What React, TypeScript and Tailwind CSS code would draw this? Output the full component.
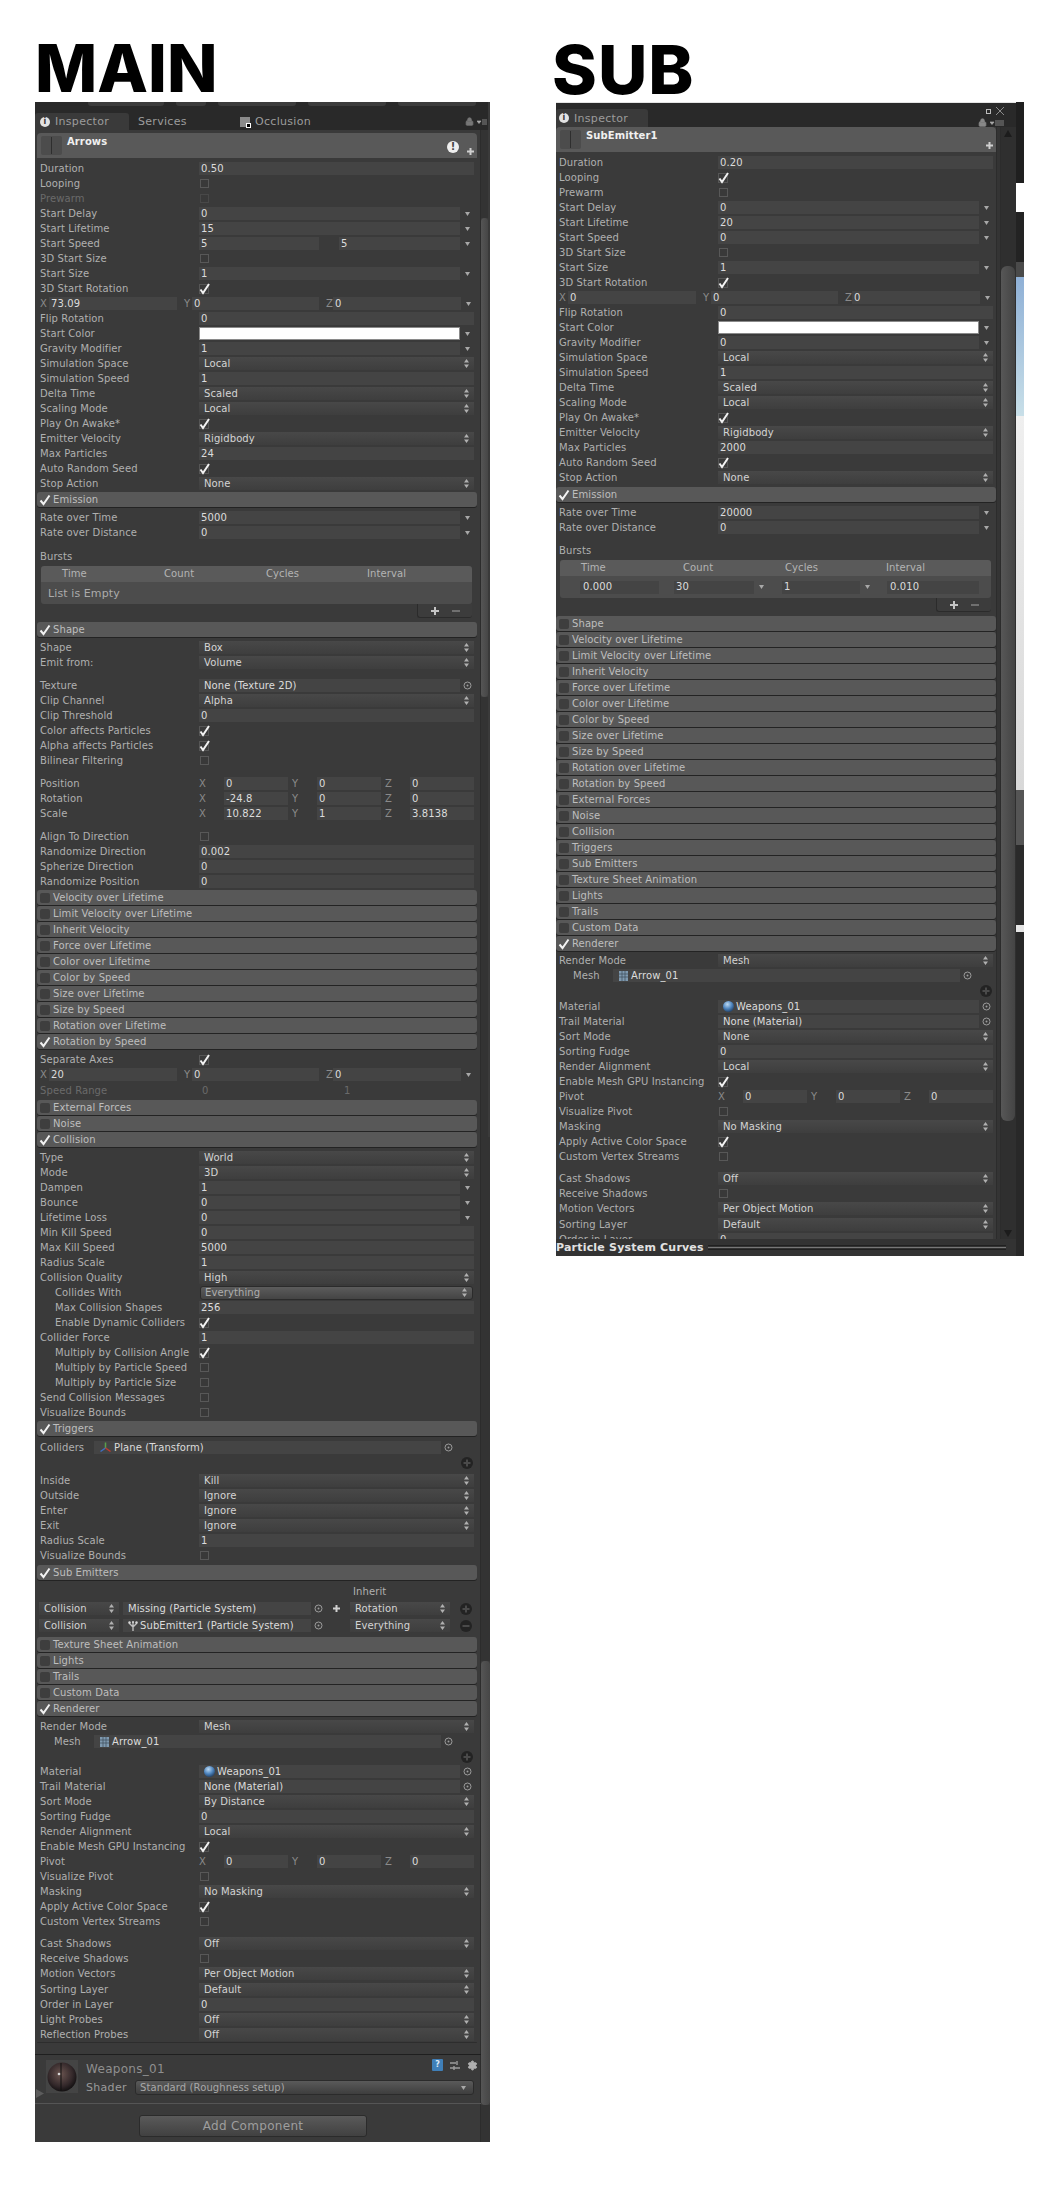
import React from 'react';
import clsx from 'clsx';
import { Lock, Settings } from 'lucide-react';

const Check = () => (
  <svg width="14" height="14" viewBox="0 0 14 14" className="-ml-[1px]">
    <rect x="1.5" y="2.5" width="9" height="9" fill="#3a3a3a" stroke="#565656" />
    <path d="M2.5 7.5 L5 11 L11 2" fill="none" stroke="#f2f2f2" strokeWidth="2" />
  </svg>
);

const EmptyBox = ({ dim }: { dim?: boolean }) => (
  <div className={clsx('ml-[1px] h-[9px] w-[9px] border bg-[#393939]', dim ? 'border-[#484848]' : 'border-[#585858]')} />
);

const ArrowDown = () => (
  <svg width="5" height="4" viewBox="0 0 5 4" className="shrink-0">
    <path d="M0 0 H5 L2.5 4 Z" fill="#a8a8a8" />
  </svg>
);

const UpDown = () => (
  <svg width="5" height="9" viewBox="0 0 5 9" className="shrink-0">
    <path d="M0 3.5 L2.5 0 L5 3.5 Z M0 5.5 H5 L2.5 9 Z" fill="#b0b0b0" />
  </svg>
);

const Target = () => (
  <svg width="9" height="9" viewBox="0 0 9 9" className="shrink-0">
    <circle cx="4.5" cy="4.5" r="3.5" fill="none" stroke="#9c9c9c" />
    <circle cx="4.5" cy="4.5" r="1" fill="#9c9c9c" />
  </svg>
);

const RoundBtn = ({ minus }: { minus?: boolean }) => (
  <svg width="12" height="12" viewBox="0 0 12 12" className="shrink-0">
    <circle cx="6" cy="6" r="6" fill="#232323" />
    <path d={minus ? 'M2.5 6 H9.5' : 'M2.5 6 H9.5 M6 2.5 V9.5'} stroke="#4a4a4a" strokeWidth="2" />
  </svg>
);

const Sphere = ({ id }: { id: string }) => (
  <svg width="11" height="11" viewBox="0 0 11 11" className="shrink-0">
    <defs>
      <radialGradient id={id} cx="0.4" cy="0.3" r="0.7">
        <stop offset="0" stopColor="#bcd9f2" />
        <stop offset="0.6" stopColor="#4c83bd" />
        <stop offset="1" stopColor="#27466b" />
      </radialGradient>
    </defs>
    <circle cx="5.5" cy="5.5" r="5.5" fill={`url(#${id})`} />
  </svg>
);

const MeshIcon = () => (
  <svg width="9" height="10" viewBox="0 0 9 10" className="shrink-0">
    <rect width="9" height="10" fill="#7f9ab0" />
    <path d="M3 0 V10 M6 0 V10 M0 3 H9 M0 6 H9" stroke="#3d4c5a" strokeWidth="0.7" />
  </svg>
);

const AxisIcon = () => (
  <svg width="11" height="11" viewBox="0 0 11 11" className="shrink-0">
    <path d="M5.5 6 V0.5" stroke="#5aa04c" strokeWidth="1.5" />
    <path d="M5.5 6 L0.5 9.5" stroke="#3f6fc2" strokeWidth="1.5" />
    <path d="M5.5 6 L10.5 9.5" stroke="#c2392f" strokeWidth="1.5" />
  </svg>
);

const ParticleIcon = () => (
  <svg width="10" height="10" viewBox="0 0 10 10" className="shrink-0">
    <path d="M5 10 V5 M5 6 L1 2 M5 6 L9 2 M5 5 V1" stroke="#bdbdbd" strokeWidth="1.4" />
    <circle cx="1.5" cy="1.5" r="1.2" fill="#d8d8d8" />
    <circle cx="8.5" cy="1.5" r="1.2" fill="#d8d8d8" />
    <circle cx="5" cy="1" r="1" fill="#d8d8d8" />
  </svg>
);

const InfoIcon = () => (
  <div className="flex h-[10px] w-[10px] items-center justify-center rounded-full bg-[#e2e2e2] text-[8px] font-bold leading-none text-[#333]">i</div>
);

const Row = ({ label, dim, indent, children }: { label: string; dim?: boolean; indent?: boolean; children?: React.ReactNode }) => (
  <div className="flex h-[15px] items-center pl-[3px]">
    <div className={clsx('w-[159px] shrink-0 whitespace-nowrap', indent && 'pl-[15px]', dim ? 'text-[#6a6a6a]' : 'text-[#b0b0b0]')}>{label}</div>
    <div className="flex w-[275px] items-center">{children}</div>
  </div>
);

const Box = ({ v, w, dim }: { v?: string; w?: string; dim?: boolean }) => (
  <div className={clsx('flex h-[13px] items-center bg-[#444444] pl-[2px] whitespace-nowrap', dim ? 'text-[#777]' : 'text-[#dcdcdc]', w)}>{v}</div>
);

const Field = ({ l, v, indent }: { l: string; v: string; indent?: boolean }) => (
  <Row label={l} indent={indent}>
    <Box v={v} w="w-full" />
  </Row>
);

const ArrowField = ({ l, v }: { l: string; v: string }) => (
  <Row label={l}>
    <Box v={v} w="w-[261px]" />
    <div className="ml-[5px]"><ArrowDown /></div>
  </Row>
);

const Toggle = ({ l, on, dim, indent }: { l: string; on?: boolean; dim?: boolean; indent?: boolean }) => (
  <Row label={l} dim={dim} indent={indent}>
    {on ? <Check /> : <EmptyBox dim={dim} />}
  </Row>
);

const Drop = ({ l, v }: { l: string; v: string }) => (
  <Row label={l}>
    <div className="flex h-[13px] w-full items-center justify-between bg-gradient-to-b from-[#484848] to-[#3e3e3e] pl-[5px] pr-[5px] text-[#d4d4d4]">
      <span className="whitespace-nowrap">{v}</span>
      <UpDown />
    </div>
  </Row>
);

const ObjField = ({ l, v, icon }: { l: string; v: string; icon?: React.ReactNode }) => (
  <Row label={l}>
    <div className="flex h-[13px] w-[261px] items-center gap-[2px] bg-[#444444] pl-[5px] whitespace-nowrap text-[#dcdcdc]">
      {icon}
      {v}
    </div>
    <div className="ml-[3px]"><Target /></div>
  </Row>
);

const Vec = ({ l, x, y, z }: { l: string; x: string; y: string; z: string }) => (
  <Row label={l}>
    <div className="grid w-full grid-cols-3 gap-[4px]">
      {[['X', x], ['Y', y], ['Z', z]].map(([a, b]) => (
        <div key={a} className="flex items-center">
          <span className="w-[25px] shrink-0 text-[#8a8a8a]">{a}</span>
          <Box v={b} w="flex-1" />
        </div>
      ))}
    </div>
  </Row>
);

const Vec3Wide = ({ x, y, z }: { x: string; y: string; z: string }) => (
  <div className="flex h-[15px] items-center pl-[3px]">
    <span className="w-[8px] text-[#8a8a8a]">X</span>
    <Box v={x} w="w-[128px] ml-[1px]" />
    <span className="ml-[7px] w-[8px] text-[#8a8a8a]">Y</span>
    <Box v={y} w="w-[127px]" />
    <span className="ml-[7px] w-[7px] text-[#8a8a8a]">Z</span>
    <Box v={z} w="w-[128px]" />
    <div className="ml-[5px]"><ArrowDown /></div>
  </div>
);

const Header = ({ t, on }: { t: string; on?: boolean }) => (
  <div className="mb-[1px] flex h-[15px] items-center rounded-[3px] bg-[#585858] text-[#bebebe] shadow-[0_1px_0_#232323]">
    <div className="ml-[3px] flex h-[10px] w-[10px] shrink-0 items-center justify-center rounded-[2px]">
      {on ? (
        <svg width="12" height="12" viewBox="0 0 12 12" className="shrink-0">
          <path d="M1.5 6.5 L4.5 10 L10.5 1.5" fill="none" stroke="#f2f2f2" strokeWidth="2" />
        </svg>
      ) : (
        <div className="h-[10px] w-[10px] rounded-[2px] bg-[#3e3e3e]" />
      )}
    </div>
    <span className="ml-[3px] whitespace-nowrap">{t}</span>
  </div>
);

const Headers = ({ items }: { items: string[] }) => (
  <>
    {items.map((t) => (
      <Header key={t} t={t} />
    ))}
  </>
);

const Bursts = ({ empty }: { empty?: boolean }) => (
  <div className="ml-[4px] mt-[2px] w-[431px]">
    <div className="grid h-[16px] grid-cols-[102px_102px_101px_1fr] items-center rounded-t-[3px] bg-[#5a5a5a] pl-[21px] text-[#b4b4b4]">
      <span>Time</span>
      <span>Count</span>
      <span>Cycles</span>
      <span>Interval</span>
    </div>
    {empty ? (
      <div className="flex h-[22px] items-center rounded-b-[3px] bg-[#4c4c4c] pl-[7px] text-[11px] text-[#ababab]">List is Empty</div>
    ) : (
      <div className="flex h-[22px] items-center rounded-b-[3px] bg-[#4c4c4c] pl-[20px]">
        <Box v="0.000" w="w-[79px] pl-[3px]" />
        <Box v="30" w="w-[80px] ml-[15px]" />
        <div className="ml-[5px]"><ArrowDown /></div>
        <Box v="1" w="w-[78px] ml-[18px]" />
        <div className="ml-[5px]"><ArrowDown /></div>
        <Box v="0.010" w="w-[92px] ml-[17px] pl-[3px]" />
      </div>
    )}
    <div className="flex justify-end">
      <div className="flex h-[14px] w-[55px] items-center justify-around rounded-b-[3px] border-b border-l border-[#2b2b2b] bg-[#3c3c3c] px-[6px]">
        <svg width="10" height="10" viewBox="0 0 10 10"><path d="M1 5 H9 M5 1 V9" stroke="#c4c4c4" strokeWidth="2" /></svg>
        <svg width="10" height="10" viewBox="0 0 10 10"><path d="M1 5 H9" stroke="#707070" strokeWidth="2" /></svg>
      </div>
    </div>
  </div>
);

const ThumbBox = () => (
  <div className="ml-[4px] flex h-[19px] w-[21px] shrink-0 justify-center rounded-[2px] bg-[#4c4c4c]">
    <div className="mt-[1px] h-[17px] w-[1px] bg-[#2e2e2e]" />
  </div>
);

const MeshRow = ({ l, v, indent, icon }: { l: string; v: string; indent?: boolean; icon: React.ReactNode }) => (
  <div className="flex h-[15px] items-center pl-[3px]">
    <span className={clsx('w-[54px] shrink-0 text-[#b0b0b0]', indent && 'pl-[14px]')}>{l}</span>
    <div className="flex h-[13px] w-[347px] items-center gap-[3px] bg-[#444444] pl-[6px] text-[#dcdcdc]">
      {icon}
      {v}
    </div>
    <div className="ml-[3px]"><Target /></div>
  </div>
);

const AddRow = ({ h }: { h: string }) => (
  <div className={clsx('flex items-center justify-end pr-[4px]', h)}>
    <RoundBtn />
  </div>
);

const SmallDrop = ({ v, w, icon }: { v: string; w: string; icon?: React.ReactNode }) => (
  <div className={clsx('flex h-[13px] items-center justify-between bg-gradient-to-b from-[#484848] to-[#3e3e3e] pl-[5px] pr-[5px] text-[#d4d4d4]', w)}>
    <span className="flex items-center gap-[2px]">{icon}{v}</span>
    <UpDown />
  </div>
);

const RendererBody = ({ sort, extra }: { sort: string; extra?: boolean }) => (
  <>
    <Drop l="Render Mode" v="Mesh" />
    <MeshRow l="Mesh" v="Arrow_01" indent icon={<MeshIcon />} />
    <AddRow h={extra ? 'h-[15px]' : 'h-[16px]'} />
    <ObjField l="Material" v="Weapons_01" icon={<Sphere id={extra ? 'mat-a' : 'mat-b'} />} />
    <ObjField l="Trail Material" v="None (Material)" />
    <Drop l="Sort Mode" v={sort} />
    <Field l="Sorting Fudge" v="0" />
    <Drop l="Render Alignment" v="Local" />
    <Toggle l="Enable Mesh GPU Instancing" on />
    <Vec l="Pivot" x="0" y="0" z="0" />
    <Toggle l="Visualize Pivot" />
    <Drop l="Masking" v="No Masking" />
    <Toggle l="Apply Active Color Space" on />
    <Toggle l="Custom Vertex Streams" />
    <div className="h-[7px]" />
    <Drop l="Cast Shadows" v="Off" />
    <Toggle l="Receive Shadows" />
    <Drop l="Motion Vectors" v="Per Object Motion" />
    <div className="h-[1px]" />
    <Drop l="Sorting Layer" v="Default" />
    <Field l="Order in Layer" v="0" />
  </>
);

const MainSystem = ({ sub }: { sub?: boolean }) => (
  <>
    <Field l="Duration" v={sub ? '0.20' : '0.50'} />
    <Toggle l="Looping" on={sub} />
    <Toggle l="Prewarm" dim={!sub} />
    <ArrowField l="Start Delay" v="0" />
    <ArrowField l="Start Lifetime" v={sub ? '20' : '15'} />
    {sub ? (
      <ArrowField l="Start Speed" v="0" />
    ) : (
      <Row label="Start Speed">
        <Box v="5" w="w-[120px]" />
        <Box v="5" w="w-[121px] ml-[20px]" />
        <div className="ml-[5px]"><ArrowDown /></div>
      </Row>
    )}
    <Toggle l="3D Start Size" />
    <ArrowField l="Start Size" v="1" />
    <Toggle l="3D Start Rotation" on />
    <Vec3Wide x={sub ? '0' : '73.09'} y="0" z="0" />
    <Field l="Flip Rotation" v="0" />
    <Row label="Start Color">
      <div className="h-[13px] w-[261px] border border-[#8a8a8a] bg-white" />
      <div className="ml-[5px]"><ArrowDown /></div>
    </Row>
    <ArrowField l="Gravity Modifier" v={sub ? '0' : '1'} />
    <Drop l="Simulation Space" v="Local" />
    <Field l="Simulation Speed" v="1" />
    <Drop l="Delta Time" v="Scaled" />
    <Drop l="Scaling Mode" v="Local" />
    <Toggle l="Play On Awake*" on />
    <Drop l="Emitter Velocity" v="Rigidbody" />
    <Field l="Max Particles" v={sub ? '2000' : '24'} />
    <Toggle l="Auto Random Seed" on />
    <Drop l="Stop Action" v="None" />
    <div className={sub ? 'h-[2px]' : 'h-[1px]'} />
    <Header t="Emission" on />
    <div className="h-[2px]" />
    <ArrowField l="Rate over Time" v={sub ? '20000' : '5000'} />
    <ArrowField l="Rate over Distance" v="0" />
    <div className={sub ? 'h-[8px]' : 'h-[9px]'} />
    <Row label="Bursts" />
    <Bursts empty={!sub} />
    <div className="h-[4px]" />
  </>
);

const MainColumn = () => (
  <div className="h-[2040px] w-[455px] bg-[#3a3a3a]">
    <div className="relative h-[11px] w-[453px] overflow-hidden bg-[#292929]">
      <div className="flex gap-[12px] pl-[53px]">
        {['w-[76px]', 'w-[30px]', 'w-[78px]', 'w-[78px]', 'w-[78px]'].map((w, i) => (
          <div key={i} className={clsx('h-[4px] rounded-b-[3px] bg-[#3c3c3c]', w)} />
        ))}
      </div>
    </div>
    <div className="flex h-[17px] w-[453px] items-stretch bg-[#292929] text-[11px] tracking-[0.3px] text-[#9c9c9c]">
      <div className="flex w-[94px] items-center gap-[5px] rounded-t-[3px] bg-[#3a3a3a] pl-[5px]">
        <InfoIcon />
        Inspector
      </div>
      <div className="flex w-[111px] items-center pl-[9px]">Services</div>
      <div className="flex w-[225px] items-center gap-[5px]">
        <div className="relative h-[10px] w-[10px] bg-[#8a8a8a]">
          <div className="absolute -bottom-[1px] -right-[1px] h-[5px] w-[5px] border border-white bg-black" />
        </div>
        Occlusion
      </div>
      <div className="flex items-center gap-[3px]">
        <Lock size={9} className="fill-[#777] text-[#777]" />
        <svg width="10" height="6" viewBox="0 0 10 6"><path d="M0 2 H4 L2 4.5 Z M5 1 H10 M5 3 H10 M5 5 H10" fill="#aaa" stroke="#aaa" strokeWidth="0.7" /></svg>
      </div>
    </div>
    <div className="flex">
      <div className="w-[446px] shrink-0">
        <div className="w-[446px] border-r border-[#2c2c2c] pl-[2px] pr-[3px] pt-[3px]">
          <div className="relative flex h-[25px] w-[440px] rounded-t-[4px] bg-[#595959] pt-[3px]">
            <ThumbBox />
            <span className="ml-[5px] font-bold leading-[12px] text-[#f0f0f0]">Arrows</span>
            <div className="absolute bottom-[3px] right-[3px] flex items-end gap-[8px]">
              <div className="mb-[2px] flex h-[12px] w-[12px] items-center justify-center rounded-full bg-[#efefef] text-[10px] font-bold leading-none text-[#444]">!</div>
              <svg width="7" height="7" viewBox="0 0 7 7"><path d="M0 3.5 H7 M3.5 0 V7" stroke="#d0d0d0" strokeWidth="2" /></svg>
            </div>
          </div>
          <div className="h-[3px]" />
          <MainSystem />
          <Header t="Shape" on />
          <div className="h-[2px]" />
          <Drop l="Shape" v="Box" />
          <Drop l="Emit from:" v="Volume" />
          <div className="h-[8px]" />
          <ObjField l="Texture" v="None (Texture 2D)" />
          <Drop l="Clip Channel" v="Alpha" />
          <Field l="Clip Threshold" v="0" />
          <Toggle l="Color affects Particles" on />
          <Toggle l="Alpha affects Particles" on />
          <Toggle l="Bilinear Filtering" />
          <div className="h-[8px]" />
          <Vec l="Position" x="0" y="0" z="0" />
          <Vec l="Rotation" x="-24.8" y="0" z="0" />
          <Vec l="Scale" x="10.822" y="1" z="3.8138" />
          <div className="h-[8px]" />
          <Toggle l="Align To Direction" />
          <Field l="Randomize Direction" v="0.002" />
          <Field l="Spherize Direction" v="0" />
          <Field l="Randomize Position" v="0" />
          <div className="h-[1px]" />
          <Headers items={['Velocity over Lifetime', 'Limit Velocity over Lifetime', 'Inherit Velocity', 'Force over Lifetime', 'Color over Lifetime', 'Color by Speed', 'Size over Lifetime', 'Size by Speed', 'Rotation over Lifetime']} />
          <Header t="Rotation by Speed" on />
          <div className="h-[2px]" />
          <Toggle l="Separate Axes" on />
          <Vec3Wide x="20" y="0" z="0" />
          <div className="flex h-[17px] items-center pl-[3px] text-[#6a6a6a]">
            <span className="w-[162px]">Speed Range</span>
            <span className="w-[142px]">0</span>
            <span>1</span>
          </div>
          <div className="h-[1px]" />
          <Headers items={['External Forces', 'Noise']} />
          <Header t="Collision" on />
          <div className="h-[2px]" />
          <Drop l="Type" v="World" />
          <Drop l="Mode" v="3D" />
          <ArrowField l="Dampen" v="1" />
          <ArrowField l="Bounce" v="0" />
          <ArrowField l="Lifetime Loss" v="0" />
          <Field l="Min Kill Speed" v="0" />
          <Field l="Max Kill Speed" v="5000" />
          <Field l="Radius Scale" v="1" />
          <Drop l="Collision Quality" v="High" />
          <Row label="Collides With" indent>
            <div className="ml-[1px] flex h-[14px] w-[273px] items-center justify-between rounded-[3px] border border-[#2b2b2b] bg-gradient-to-b from-[#5c5c5c] to-[#444444] pl-[4px] pr-[5px] text-[#aeaeae]">
              Everything
              <UpDown />
            </div>
          </Row>
          <Field l="Max Collision Shapes" v="256" indent />
          <Toggle l="Enable Dynamic Colliders" on indent />
          <Field l="Collider Force" v="1" />
          <Toggle l="Multiply by Collision Angle" on indent />
          <Toggle l="Multiply by Particle Speed" indent />
          <Toggle l="Multiply by Particle Size" indent />
          <Toggle l="Send Collision Messages" />
          <Toggle l="Visualize Bounds" />
          <div className="h-[1px]" />
          <Header t="Triggers" on />
          <div className="h-[3px]" />
          <MeshRow l="Colliders" v="Plane (Transform)" icon={<AxisIcon />} />
          <AddRow h="h-[15px]" />
          <div className="h-[3px]" />
          <Drop l="Inside" v="Kill" />
          <Drop l="Outside" v="Ignore" />
          <Drop l="Enter" v="Ignore" />
          <Drop l="Exit" v="Ignore" />
          <Field l="Radius Scale" v="1" />
          <Toggle l="Visualize Bounds" />
          <div className="h-[2px]" />
          <Header t="Sub Emitters" on />
          <div className="h-[3px]" />
          <div className="flex h-[15px] items-center pl-[316px] text-[#b0b0b0]">Inherit</div>
          <div className="h-[1px]" />
          <div className="flex h-[17px] items-center pl-[2px]">
            <SmallDrop v="Collision" w="w-[80px]" />
            <div className="ml-[4px] flex h-[13px] w-[188px] items-center bg-[#444444] pl-[5px] whitespace-nowrap text-[#dcdcdc]">Missing (Particle System)</div>
            <div className="ml-[3px]"><Target /></div>
            <svg width="7" height="7" viewBox="0 0 7 7" className="ml-[10px]"><path d="M0 3.5 H7 M3.5 0 V7" stroke="#d0d0d0" strokeWidth="2" /></svg>
            <SmallDrop v="Rotation" w="w-[100px] ml-[10px]" />
            <div className="ml-[10px]"><RoundBtn /></div>
          </div>
          <div className="flex h-[17px] items-center pl-[2px]">
            <SmallDrop v="Collision" w="w-[80px]" />
            <div className="ml-[4px] flex h-[13px] w-[188px] items-center gap-[2px] bg-[#444444] pl-[5px] whitespace-nowrap text-[#dcdcdc]"><ParticleIcon />SubEmitter1 (Particle System)</div>
            <div className="ml-[3px]"><Target /></div>
            <SmallDrop v="Everything" w="w-[100px] ml-[27px]" />
            <div className="ml-[10px]"><RoundBtn minus /></div>
          </div>
          <div className="h-[3px]" />
          <Headers items={['Texture Sheet Animation', 'Lights', 'Trails', 'Custom Data']} />
          <Header t="Renderer" on />
          <div className="h-[2px]" />
          <RendererBody sort="By Distance" extra />
          <Drop l="Light Probes" v="Off" />
          <Drop l="Reflection Probes" v="Off" />
          <div className="h-[1px] rounded-b-[2px] bg-[#2d2d2d]" />
          <div className="h-[11px]" />
        </div>
        <div className="border-t border-[#1f1f1f]" />
        <div className="relative flex h-[48px] w-[446px] border-r border-[#2c2c2c] pt-[5px]">
          <svg width="8" height="9" viewBox="0 0 8 9" className="ml-[1px] mt-[29px]"><path d="M0 0 L8 4.5 L0 9 Z" fill="#5c5c5c" /></svg>
          <div className="ml-[2px] flex h-[33px] w-[32px] items-center justify-center bg-[#444444]">
            <svg width="30" height="30" viewBox="0 0 30 30">
              <defs>
                <radialGradient id="ball" cx="0.45" cy="0.4" r="0.6">
                  <stop offset="0" stopColor="#6b5550" />
                  <stop offset="0.7" stopColor="#33282a" />
                  <stop offset="1" stopColor="#141112" />
                </radialGradient>
              </defs>
              <circle cx="15" cy="15" r="14.5" fill="url(#ball)" />
              <path d="M14 1 V29" stroke="#111" strokeWidth="1" />
              <circle cx="12" cy="12" r="1.3" fill="#d8d8d8" />
            </svg>
          </div>
          <div className="ml-[8px] flex-1">
            <div className="h-[20px] text-[12px] leading-[18px] tracking-[0.3px] text-[#8f8f8f]">Weapons_01</div>
            <div className="flex items-center">
              <span className="w-[49px] text-[11px] tracking-[0.3px] text-[#9a9a9a]">Shader</span>
              <div className="flex h-[15px] w-[339px] items-center justify-between rounded-[3px] border border-[#2b2b2b] bg-gradient-to-b from-[#5a5a5a] to-[#3e3e3e] pl-[4px] pr-[7px] text-[#a8a8a8]">
                Standard (Roughness setup)
                <ArrowDown />
              </div>
            </div>
          </div>
          <div className="absolute right-[2px] top-[4px] flex items-center gap-[7px]">
            <div className="flex h-[12px] w-[11px] items-center justify-center rounded-[1px] bg-[#3f7fb8] text-[8px] font-bold leading-none text-[#dbe9f5]">?</div>
            <svg width="10" height="11" viewBox="0 0 10 11"><path d="M0 3 H6 M0 8 H10 M7 1 V5 M4 6 V10" stroke="#9c9c9c" strokeWidth="1.4" /></svg>
            <Settings size={11} className="fill-[#b0b0b0] text-[#b0b0b0]" />
          </div>
        </div>
        <div className="h-[1px] w-[446px] bg-[#555555]" />
        <div className="flex h-[38px] w-[446px] items-start border-r border-[#2c2c2c] pl-[104px] pt-[11px]">
          <div className="flex h-[22px] w-[228px] items-center justify-center rounded-[3px] border border-[#2b2b2b] bg-gradient-to-b from-[#5a5a5a] to-[#414141] text-[12px] tracking-[0.3px] text-[#9e9e9e]">Add Component</div>
        </div>
      </div>
      <div className="w-[9px]">
        <div className="h-[88px] w-[7px] bg-[#333333]" />
        <div className="h-[479px] w-[7px] rounded-[4px] bg-gradient-to-r from-[#555555] to-[#464646]" />
        <div className="h-[440px] w-[7px] bg-[#333333]" />
        <div className="h-[524px] w-[9px] bg-[#333333]" />
        <div className="h-[444px] w-[9px] rounded-[4px] bg-gradient-to-r from-[#555555] to-[#464646]" />
        <div className="h-[37px] w-[9px] bg-[#333333]" />
      </div>
    </div>
  </div>
);

const SubColumn = () => (
  <div className="flex h-[1154px] w-[468px]">
    <div className="w-[460px] bg-[#3a3a3a]">
      <div className="relative flex h-[25px] items-end border-t border-[#e4e4e4] bg-[#292929]">
        <div className="flex h-[18px] w-[92px] items-center gap-[5px] rounded-t-[3px] bg-[#3a3a3a] pl-[3px] text-[11px] tracking-[0.3px] text-[#9c9c9c]">
          <InfoIcon />
          Inspector
        </div>
        <div className="absolute right-[12px] top-[4px] flex flex-col items-end gap-[3px]">
          <div className="flex items-center gap-[5px]">
            <div className="h-[5px] w-[5px] border border-[#bbb]" />
            <svg width="8" height="8" viewBox="0 0 8 8"><path d="M0 0 L8 8 M8 0 L0 8" stroke="#8a8a8a" /></svg>
          </div>
          <div className="flex items-center gap-[3px]">
            <Lock size={9} className="fill-[#888] text-[#888]" />
            <svg width="14" height="6" viewBox="0 0 14 6"><path d="M0 2 H4 L2 4.5 Z M5 1 H14 M5 3 H14 M5 5 H14" fill="#aaa" stroke="#aaa" strokeWidth="0.7" /></svg>
          </div>
        </div>
      </div>
      <div className="flex h-[1112px]">
        <div className="h-full w-[440px] shrink-0 overflow-hidden">
          <div className="relative flex h-[25px] w-[440px] rounded-t-[4px] bg-[#595959] pt-[3px]">
            <ThumbBox />
            <span className="ml-[5px] font-bold leading-[12px] text-[#f0f0f0]">SubEmitter1</span>
            <svg width="7" height="7" viewBox="0 0 7 7" className="absolute bottom-[3px] right-[3px]"><path d="M0 3.5 H7 M3.5 0 V7" stroke="#d0d0d0" strokeWidth="2" /></svg>
          </div>
          <div className="h-[3px]" />
          <MainSystem sub />
          <Headers items={['Shape', 'Velocity over Lifetime', 'Limit Velocity over Lifetime', 'Inherit Velocity', 'Force over Lifetime', 'Color over Lifetime', 'Color by Speed', 'Size over Lifetime', 'Size by Speed', 'Rotation over Lifetime', 'Rotation by Speed', 'External Forces', 'Noise', 'Collision', 'Triggers', 'Sub Emitters', 'Texture Sheet Animation', 'Lights', 'Trails', 'Custom Data']} />
          <Header t="Renderer" on />
          <div className="h-[1px]" />
          <RendererBody sort="None" />
        </div>
        <div className="w-[5px] border-x border-[#2c2c2c] bg-[#343434]" />
        <div className="flex w-[15px] flex-col items-center bg-[#2f2f2f] pr-[1px]">
          <svg width="8" height="7" viewBox="0 0 8 7" className="mt-[3px] shrink-0"><path d="M4 0 L8 7 H0 Z" fill="#1c1c1c" /></svg>
          <div className="mt-[129px] h-[855px] w-[14px] rounded-[6px] bg-gradient-to-r from-[#575757] to-[#444444]" />
          <svg width="8" height="7" viewBox="0 0 8 7" className="mb-[2px] mt-auto shrink-0"><path d="M4 7 L8 0 H0 Z" fill="#1c1c1c" /></svg>
        </div>
      </div>
      <div className="flex h-[17px] items-center bg-[#333333] text-[11px] font-bold tracking-[0.2px] text-[#e2e2e2]">
        <span className="whitespace-nowrap">Particle System Curves</span>
        <div className="ml-[4px] h-[5px] w-[298px] border-y border-[#202020] bg-[#777777] bg-clip-content py-[1px]" />
      </div>
    </div>
    <div className="flex w-[8px] flex-col">
      <div className="h-[81px] bg-[#1f1f1f]" />
      <div className="h-[29px] bg-white" />
      <div className="h-[50px] bg-[#232323]" />
      <div className="h-[15px] bg-[#4a4a4a]" />
      <div className="h-[139px] bg-gradient-to-b from-[#8fb0d6] to-[#c8dfe8]" />
      <div className="h-[374px] bg-gradient-to-b from-[#efefef] to-[#d8d8d8]" />
      <div className="h-[55px] bg-[#555555]" />
      <div className="h-[80px] bg-[#2a2a2a]" />
      <div className="h-[7px] bg-[#e5e5e5]" />
      <div className="flex-1 bg-[#282828]" />
    </div>
  </div>
);

export default function App() {
  return (
    <div className="flex h-[2185px] w-[1056px] bg-white pl-[35px] font-['DejaVu_Sans',sans-serif] text-[10px] leading-none tracking-[0.1px]">
      <div className="w-[521px] shrink-0">
        <div className="h-[102px] pt-[35px] font-['Inter',sans-serif] text-[66px] font-extrabold leading-[66px] tracking-normal text-black">MAIN</div>
        <MainColumn />
      </div>
      <div>
        <div className="-ml-[4px] h-[102px] pt-[35px] font-['Inter',sans-serif] text-[68px] font-extrabold leading-[68px] tracking-[1px] text-black">SUB</div>
        <SubColumn />
      </div>
    </div>
  );
}
